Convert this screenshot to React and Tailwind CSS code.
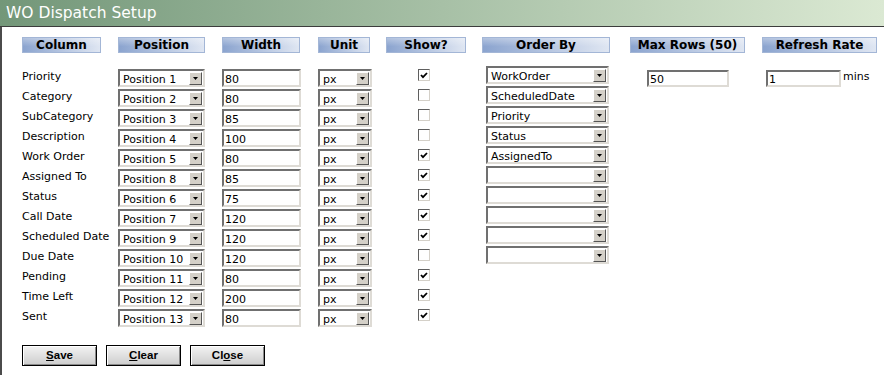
import React from 'react';

const rows = [
  ['Priority', 'Position 1', '80', true],
  ['Category', 'Position 2', '80', false],
  ['SubCategory', 'Position 3', '85', false],
  ['Description', 'Position 4', '100', false],
  ['Work Order', 'Position 5', '80', true],
  ['Assigned To', 'Position 8', '85', true],
  ['Status', 'Position 6', '75', true],
  ['Call Date', 'Position 7', '120', true],
  ['Scheduled Date', 'Position 9', '120', true],
  ['Due Date', 'Position 10', '120', false],
  ['Pending', 'Position 11', '80', true],
  ['Time Left', 'Position 12', '200', true],
  ['Sent', 'Position 13', '80', true],
];

const orderBy = ['WorkOrder', 'ScheduledDate', 'Priority', 'Status', 'AssignedTo', '', '', '', '', ''];

const Head = ({ className, children }) => (
  <div
    className={`h-[16px] flex items-center justify-center border border-[#a3b6d6] bg-[linear-gradient(to_bottom,rgba(255,255,255,0.35),rgba(255,255,255,0)_60%),linear-gradient(to_right,#8ba4cf,#dfe6f2)] font-bold text-[12px] leading-none text-black ${className}`}
  >
    {children}
  </div>
);

const Arrow = () => (
  <span className="w-[13px] h-[13px] shrink-0 flex items-center justify-center bg-[#d4d0c8] border border-t-[#ffffff] border-l-[#ffffff] border-r-[#555555] border-b-[#555555]">
    <svg width="5" height="3" viewBox="0 0 5 3">
      <path d="M0 0h5L2.5 3z" fill="#000" />
    </svg>
  </span>
);

const Select = ({ value, className }) => (
  <div
    className={`h-[18px] flex items-center justify-between bg-white border-2 border-t-[#707070] border-l-[#707070] border-r-[#dedbd5] border-b-[#dedbd5] pl-[3px] pr-[1px] ${className}`}
  >
    <span className="leading-[13px] pt-[2px] whitespace-nowrap">{value}</span>
    <Arrow />
  </div>
);

const Input = ({ value, className }) => (
  <div
    className={`flex items-center bg-white border-2 border-t-[#707070] border-l-[#707070] border-r-[#dedbd5] border-b-[#dedbd5] pl-[1px] ${className}`}
  >
    <span className="leading-[13px] pt-[2px]">{value}</span>
  </div>
);

const Check = ({ on }) => (
  <div className="w-[12px] h-[12px] bg-white border border-t-[#5f5f5f] border-l-[#5f5f5f] border-r-[#d4d0c8] border-b-[#d4d0c8] flex items-center justify-center">
    {on && (
      <svg width="8" height="7" viewBox="0 0 8 7">
        <path d="M1 3l2 2.2L7 1" stroke="#000" strokeWidth="1.8" fill="none" />
      </svg>
    )}
  </div>
);

const Btn = ({ pre, key1, post }) => (
  <button className="w-[75px] h-[21px] border border-black bg-[linear-gradient(to_bottom,#f3f3f3,#cdcdcd)] shadow-[inset_1px_1px_0_#ffffff,inset_-1px_-1px_0_#8a8a8a] font-['Liberation_Sans',sans-serif] font-bold text-[11.5px] leading-none text-black">
    {pre}
    <span className="underline">{key1}</span>
    {post}
  </button>
);

export default function App() {
  return (
    <div className="w-[884px] h-[375px] overflow-hidden bg-white font-['DejaVu_Sans',sans-serif] text-[11px] text-black">
      <div className="h-[27px] border-b border-[#3c3c3c] bg-[linear-gradient(to_right,#739779,#dbe9d3)] pl-[6px] pt-[4px] text-white text-[15.5px] leading-[18px]">
        WO Dispatch Setup
      </div>
      <div className="h-[348px] border-l-2 border-[#4b4b4b]">
        <div className="h-[318px] flex items-start pt-[10px] pl-[20px]">
          <div className="w-[96px]">
            <Head className="w-[79px]">Column</Head>
            <div className="mt-[17px]">
              {rows.map((r) => (
                <div key={r[0]} className="h-[20px] leading-[13px] whitespace-nowrap">
                  {r[0]}
                </div>
              ))}
            </div>
          </div>
          <div className="w-[104px]">
            <Head className="w-[87px]">Position</Head>
            <div className="mt-[16px]">
              {rows.map((r) => (
                <div key={r[0]} className="h-[20px]">
                  <Select value={r[1]} className="w-[87px]" />
                </div>
              ))}
            </div>
          </div>
          <div className="w-[96px]">
            <Head className="w-[78px]">Width</Head>
            <div className="mt-[16px]">
              {rows.map((r) => (
                <div key={r[0]} className="h-[20px]">
                  <Input value={r[2]} className="w-[79px] h-[18px]" />
                </div>
              ))}
            </div>
          </div>
          <div className="w-[68px]">
            <Head className="w-[52px]">Unit</Head>
            <div className="mt-[16px]">
              {rows.map((r) => (
                <div key={r[0]} className="h-[20px]">
                  <Select value="px" className="w-[54px]" />
                </div>
              ))}
            </div>
          </div>
          <div className="w-[96px]">
            <Head className="w-[80px]">Show?</Head>
            <div className="mt-[16px] pl-[32px]">
              {rows.map((r) => (
                <div key={r[0]} className="h-[20px]">
                  <Check on={r[3]} />
                </div>
              ))}
            </div>
          </div>
          <div className="w-[148px]">
            <Head className="w-[128px]">Order By</Head>
            <div className="mt-[13px] pl-[4px]">
              {orderBy.map((o, i) => (
                <div key={i} className="h-[20px]">
                  <Select value={o} className="w-[123px]" />
                </div>
              ))}
            </div>
          </div>
          <div className="w-[132px]">
            <Head className="w-[115px]">Max Rows (50)</Head>
            <div className="mt-[17px] pl-[17px]">
              <Input value="50" className="w-[82px] h-[17px]" />
            </div>
          </div>
          <div>
            <Head className="w-[115px]">Refresh Rate</Head>
            <div className="mt-[17px] pl-[4px] flex items-start">
              <Input value="1" className="w-[75px] h-[17px]" />
              <span className="ml-[2px] leading-[13px]">mins</span>
            </div>
          </div>
        </div>
        <div className="flex gap-[9px] pl-[20px]">
          <Btn pre="" key1="S" post="ave" />
          <Btn pre="" key1="C" post="lear" />
          <Btn pre="Cl" key1="o" post="se" />
        </div>
      </div>
    </div>
  );
}
